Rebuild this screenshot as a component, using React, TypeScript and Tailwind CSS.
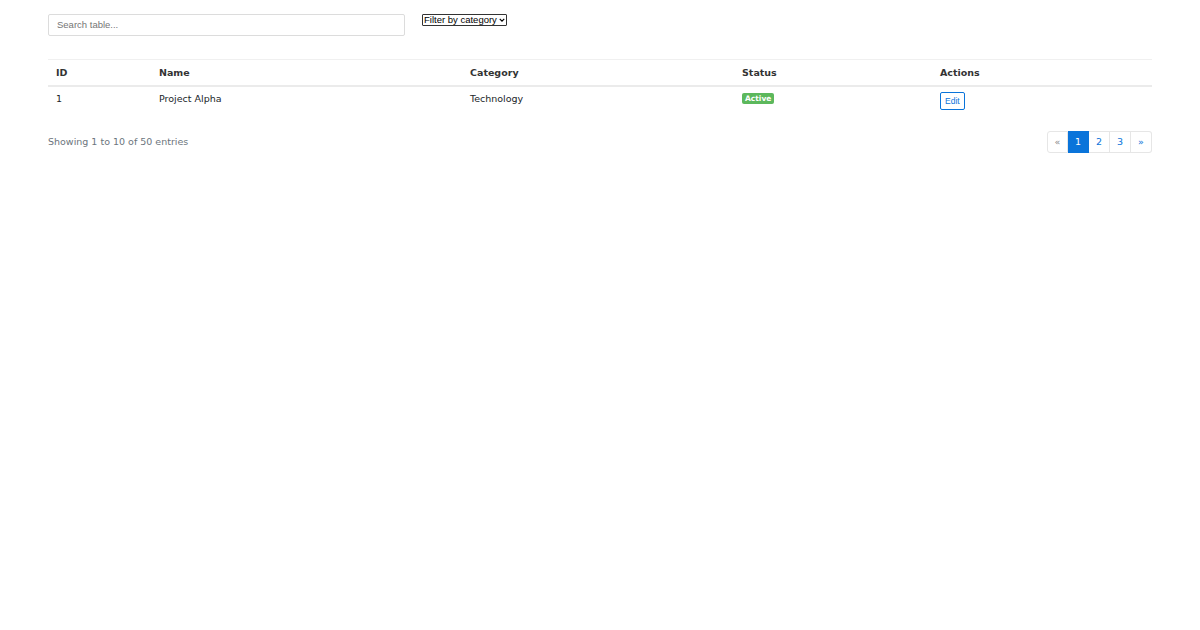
import * as React from "react";

const ROWS = [{ id: 1, name: "Project Alpha", category: "Technology", status: "Active" }];

const PAGES = ["«", "1", "2", "3", "»"];

export default function App() {
  const [query, setQuery] = React.useState("");

  return (
    <div className="min-h-screen bg-white px-12 pt-[14px] font-['DejaVu_Sans',sans-serif] text-[#212529]">
      {/* Filters */}
      <div className="flex items-start gap-[17px]">
        <input
          value={query}
          onChange={(e) => setQuery(e.target.value)}
          placeholder="Search table..."
          className="h-[22px] w-[357px] rounded-[2px] border border-[#dcdcdc] px-2 pb-px font-['Liberation_Sans',Arial,sans-serif] text-[9.5px] outline-none placeholder:text-[#757575]"
        />
        <div className="relative h-[12px] w-[85px]">
          <select className="block h-[12px] w-[85px] appearance-none rounded-[1px] border border-[#333] bg-white py-0 pr-[8px] pl-[1px] font-['Liberation_Sans',Arial,sans-serif] text-[9.5px] leading-[10px] text-black">
            <option>Filter by category</option>
          </select>
          <svg
            viewBox="0 0 8 5"
            className="pointer-events-none absolute top-[4px] right-[2px] h-[4px] w-[6px]"
            fill="none"
            stroke="#000"
            strokeWidth="1.6"
          >
            <path d="M1 1l3 3 3-3" />
          </svg>
        </div>
      </div>

      {/* Table */}
      <table className="mt-[23px] w-full border-collapse text-left text-[9.5px] leading-[15px]">
        <colgroup>
          <col className="w-[103px]" />
          <col className="w-[311px]" />
          <col className="w-[272px]" />
          <col className="w-[198px]" />
          <col className="w-[220px]" />
        </colgroup>
        <thead>
          <tr className="border-t border-b-2 border-t-[#f0f0f0] border-b-[#ebebeb]">
            {["ID", "Name", "Category", "Status", "Actions"].map((h) => (
              <th key={h} className="px-2 py-[5px] font-bold text-[#333]">
                {h}
              </th>
            ))}
          </tr>
        </thead>
        <tbody>
          {ROWS.map((r) => (
            <tr key={r.id}>
              <td className="px-2 pt-[4px] pb-[10px] align-top">{r.id}</td>
              <td className="px-2 pt-[4px] pb-[10px] align-top">{r.name}</td>
              <td className="px-2 pt-[4px] pb-[10px] align-top">{r.category}</td>
              <td className="px-2 pt-[3px] pb-[10px] align-top">
                <span className="inline-block rounded-[2px] bg-[#5cb85c] px-[3px] text-[7.5px] leading-[11px] font-bold text-white">
                  {r.status}
                </span>
              </td>
              <td className="px-2 pt-[5px] pb-[10px] align-top">
                <button className="h-[18px] rounded-[2px] border border-[#0a74da] px-[4px] font-['Liberation_Sans',Arial,sans-serif] text-[8.5px] text-[#0a74da]">
                  Edit
                </button>
              </td>
            </tr>
          ))}
        </tbody>
      </table>

      {/* Footer */}
      <div className="mt-[11px] flex items-center justify-between">
        <span className="text-[9.5px] text-[#6c757d]">Showing 1 to 10 of 50 entries</span>
        <nav className="flex">
          {PAGES.map((p, i) => {
            const active = p === "1";
            return (
              <a
                key={p}
                href="#"
                className={
                  "flex h-[22px] w-[21px] items-center justify-center border-y border-r text-[9.5px] first:rounded-l-[3px] first:border-l last:rounded-r-[3px] " +
                  (active
                    ? "border-[#0a74da] bg-[#0a74da] text-white"
                    : i === 0
                      ? "border-[#e6e6e6] text-[#8a8a8a]"
                      : "border-[#e6e6e6] text-[#0a74da]")
                }
              >
                {p}
              </a>
            );
          })}
        </nav>
      </div>
    </div>
  );
}
